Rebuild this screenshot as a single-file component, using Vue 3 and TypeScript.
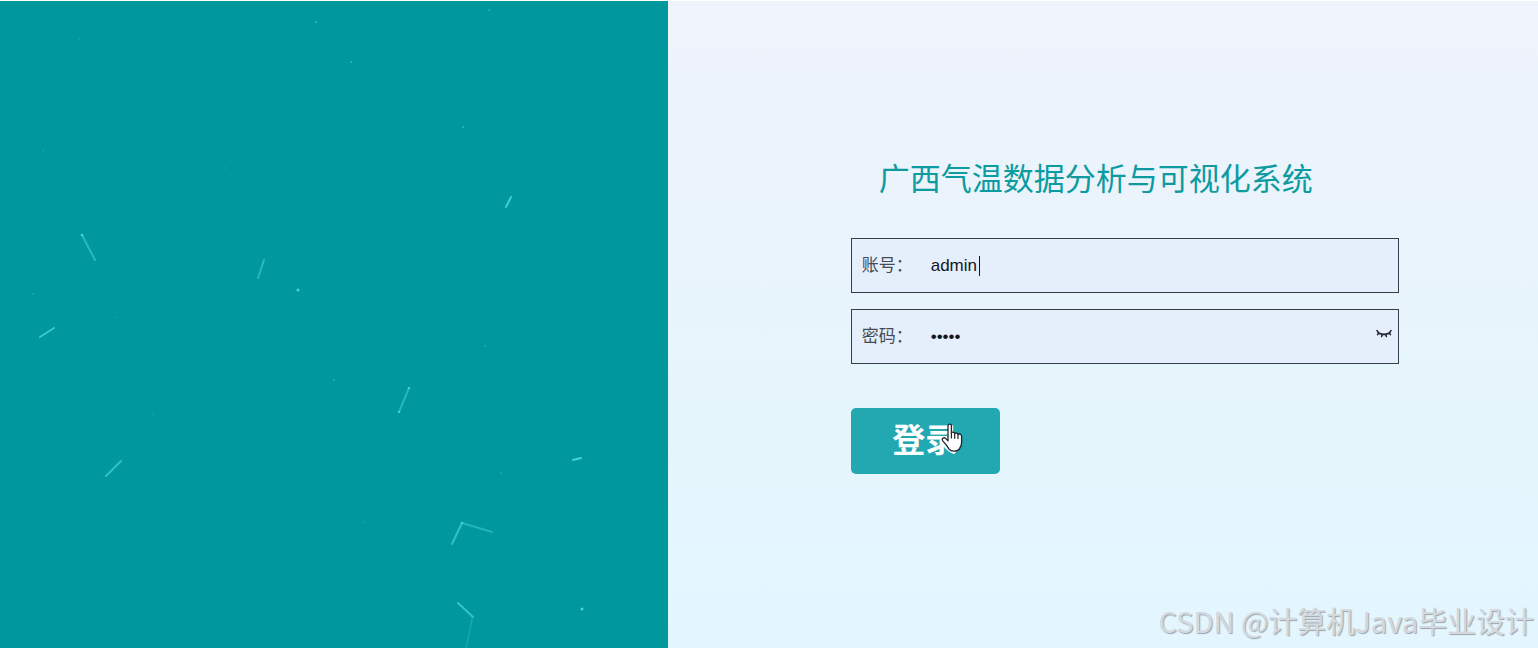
<script setup lang="ts">
import { ref } from 'vue'

interface Line { x1: number; y1: number; x2: number; y2: number; o: number }
interface Dot { x: number; y: number; r: number; o: number }

const title = '广西气温数据分析与可视化系统'
const account = ref('admin')
const password = ref('admin')
const visible = ref(false)

const lines: Line[] = [
  { x1: 82, y1: 235, x2: 95, y2: 260, o: 0.6 },
  { x1: 264, y1: 260, x2: 258, y2: 278, o: 0.6 },
  { x1: 40, y1: 337, x2: 54, y2: 328, o: 0.85 },
  { x1: 121, y1: 461, x2: 106, y2: 476, o: 0.7 },
  { x1: 511, y1: 197, x2: 506, y2: 207, o: 0.9 },
  { x1: 409, y1: 388, x2: 399, y2: 412, o: 0.55 },
  { x1: 573, y1: 460, x2: 581, y2: 458, o: 1 },
  { x1: 462, y1: 523, x2: 452, y2: 544, o: 0.7 },
  { x1: 462, y1: 523, x2: 492, y2: 532, o: 0.5 },
  { x1: 458, y1: 603, x2: 473, y2: 617, o: 0.75 },
  { x1: 472, y1: 619, x2: 466, y2: 649, o: 0.25 },
]

const dots: Dot[] = [
  { x: 82, y: 235, r: 1.3, o: 0.8 },
  { x: 298, y: 290, r: 1.5, o: 0.9 },
  { x: 409, y: 388, r: 1.3, o: 0.7 },
  { x: 399, y: 412, r: 1.3, o: 0.7 },
  { x: 462, y: 523, r: 1.3, o: 0.7 },
  { x: 582, y: 609, r: 1.5, o: 0.9 },
  { x: 316, y: 22, r: 1, o: 0.6 },
  { x: 351, y: 62, r: 1, o: 0.6 },
  { x: 489, y: 10, r: 1, o: 0.4 },
  { x: 463, y: 127, r: 1, o: 0.5 },
  { x: 79, y: 39, r: 1, o: 0.2 },
  { x: 43, y: 151, r: 1, o: 0.2 },
  { x: 225, y: 168, r: 1, o: 0.2 },
  { x: 33, y: 294, r: 1, o: 0.3 },
  { x: 115, y: 317, r: 1, o: 0.2 },
  { x: 334, y: 380, r: 1, o: 0.4 },
  { x: 485, y: 346, r: 1, o: 0.3 },
  { x: 501, y: 473, r: 1, o: 0.3 },
  { x: 364, y: 522, r: 1, o: 0.25 },
  { x: 153, y: 414, r: 1, o: 0.2 },
  { x: 74, y: 464, r: 1, o: 0.2 },
  { x: 293, y: 582, r: 1, o: 0.15 },
]
</script>

<template>
  <main class="page">
    <aside class="art">
      <svg class="particles" viewBox="0 1 668 647" preserveAspectRatio="xMinYMin slice" aria-hidden="true">
        <line v-for="(l, i) in lines" :key="'l' + i" :x1="l.x1" :y1="l.y1" :x2="l.x2" :y2="l.y2" :opacity="l.o" />
        <circle v-for="(d, i) in dots" :key="'d' + i" :cx="d.x" :cy="d.y" :r="d.r" :opacity="d.o" />
      </svg>
    </aside>

    <section class="panel">
      <form class="login" @submit.prevent>
        <h1 class="title">{{ title }}</h1>

        <div class="field">
          <label for="account">账号：</label>
          <div class="entry">
            <input id="account" v-model="account" type="text" autocomplete="off" />
            <span class="caret" aria-hidden="true"></span>
          </div>
        </div>

        <div class="field">
          <label for="password">密码：</label>
          <div class="entry">
            <input id="password" v-model="password" :type="visible ? 'text' : 'password'" autocomplete="off" />
          </div>
          <button class="eye" type="button" aria-label="显示密码" @click="visible = !visible">
            <svg width="18" height="12" viewBox="0 0 18 12" fill="none" stroke="#22262e" stroke-width="1.6" stroke-linecap="round">
              <path d="M2 1.6C4.5 6.6 13.5 6.6 16 1.6M4 3.8L2.6 5.6M7.2 5.4L6.6 7.4M10.8 5.4L11.4 7.4M14 3.8L15.4 5.6" />
            </svg>
          </button>
        </div>

        <button class="submit" type="submit">
          登录
          <svg class="pointer" width="23" height="30" viewBox="0 0 23 30" aria-hidden="true">
            <path
              d="M7 2.8C7 .6 10.4 .6 10.4 2.8V10.2C10.8 8.6 13.5 8.8 13.7 10.7C14.3 9.3 16.8 9.7 17 11.6C17.8 10.5 20.6 10.9 20.6 13.4V19.5C20.6 22 19.7 24 18.6 25.5C17 28.8 10 29 8 26.2L5.4 22.1L1.8 17.8C.2 15.7 2.9 13.8 4.6 15.4L7 17.7Z"
              fill="#fff" stroke="#20252b" stroke-width="1.3" stroke-linejoin="round"
            />
            <path d="M10.4 10V15M13.7 10.7V15.3M17 11.6V15.6" fill="none" stroke="#20252b" stroke-width="1.2" stroke-linecap="round" />
          </svg>
        </button>
      </form>
      <p class="watermark">CSDN @计算机Java毕业设计</p>
    </section>
  </main>
</template>

<style>
body {
  margin: 0;
}
</style>

<style scoped>
.page {
  box-sizing: border-box;
  display: grid;
  grid-template-columns: 668fr 870fr;
  min-height: 100vh;
  border-top: 1px solid #fff;
  font-family: "Liberation Sans", "Noto Sans CJK SC", sans-serif;
}
.art {
  position: relative;
  overflow: hidden;
  background: #00979d;
}
.particles {
  position: absolute;
  top: 0;
  left: 0;
  width: 100%;
  height: 100%;
}
.particles line {
  stroke: #45d2da;
  stroke-width: 2;
  stroke-linecap: round;
}
.particles circle {
  fill: #4edbe2;
}
.panel {
  position: relative;
  background: linear-gradient(180deg, #eff3fc 0%, #eaf4fc 35%, #e5f5fc 65%, #e3f6ff 100%);
}
.login {
  display: flex;
  flex-direction: column;
  width: 63%;
  margin-left: 21%;
  padding-top: 156px;
}
.title {
  margin: 0 0 36px 28px;
  font-size: 31px;
  line-height: 45px;
  font-weight: 400;
  white-space: nowrap;
  color: #0c9ba0;
}
.field {
  box-sizing: border-box;
  display: flex;
  align-items: center;
  height: 55px;
  margin-bottom: 16px;
  padding: 0 5px 0 10px;
  border: 1px solid #363e48;
  background: #e5effb;
}
.field label {
  width: 69px;
  font-size: 17px;
  line-height: 24px;
  white-space: nowrap;
  color: #454b55;
}
.entry {
  position: relative;
  flex: 1;
  display: flex;
}
.entry input {
  width: 100%;
  padding: 0;
  border: 0;
  outline: 0;
  background: transparent;
  font: 17px/24px "Liberation Sans", "Noto Sans CJK SC", sans-serif;
  color: #14171d;
}
.caret {
  position: absolute;
  top: 2px;
  left: 48px;
  width: 1px;
  height: 20px;
  background: #14171d;
}
.eye {
  display: flex;
  padding: 0 0 4px;
  border: 0;
  background: none;
}
.submit {
  position: relative;
  width: 149px;
  height: 66px;
  margin-top: 28px;
  padding: 0;
  border: 0;
  border-radius: 5px;
  background: #22a8b1;
  color: #fff;
  font: 700 33px/48px "Liberation Sans", "Noto Sans CJK SC", sans-serif;
  cursor: pointer;
}
.pointer {
  position: absolute;
  top: 15px;
  left: 90px;
}
.watermark {
  position: absolute;
  right: 4px;
  bottom: 6px;
  margin: 0;
  font: 400 29px/44px "Noto Sans CJK SC", sans-serif;
  white-space: nowrap;
  color: #d3d9de;
  text-shadow: 1px 1px 1px #9aa3a9;
}
</style>
